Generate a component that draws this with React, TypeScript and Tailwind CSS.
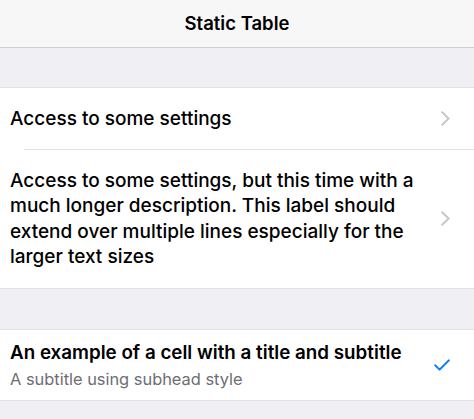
type Row = {
  title: string;
  subtitle?: string;
  accessory: 'chevron' | 'check';
};

const settingsRows: Row[] = [
  { title: 'Access to some settings', accessory: 'chevron' },
  {
    title:
      'Access to some settings, but this time with a much longer description. This label should extend over multiple lines especially for the larger text sizes',
    accessory: 'chevron',
  },
];

const subtitleRows: Row[] = [
  {
    title: 'An example of a cell with a title and subtitle',
    subtitle: 'A subtitle using subhead style',
    accessory: 'check',
  },
];

function Accessory({ kind }: { kind: Row['accessory'] }) {
  if (kind === 'check') {
    return (
      <svg width="16" height="12" viewBox="0 0 16 12" fill="none" stroke="#007aff" strokeWidth="2" strokeLinecap="round" strokeLinejoin="round">
        <polyline points="1.2,6.4 5.6,10.6 14.8,1.4" />
      </svg>
    );
  }
  return (
    <svg width="9" height="15" viewBox="0 0 9 15" fill="none" stroke="#c7c7cc" strokeWidth="2" strokeLinecap="round" strokeLinejoin="round">
      <polyline points="1.2,1.2 7.6,7.5 1.2,13.8" />
    </svg>
  );
}

function Cell({ row, last }: { row: Row; last: boolean }) {
  return (
    <div className="relative flex items-center bg-white pl-[10px] pr-[24px]">
      <div className={row.subtitle ? 'flex-1 py-[10px]' : 'flex-1 py-[18px]'}>
        <div
          className={
            row.subtitle
              ? 'text-[18.8px] font-semibold leading-[25px] text-black'
              : 'text-[19px] font-medium leading-[25.5px] text-black'
          }
        >
          {row.title}
        </div>
        {row.subtitle && (
          <div className="mt-[3px] text-[16.4px] leading-[22px] text-[#6d6d72]">{row.subtitle}</div>
        )}
      </div>
      <div className="ml-[6px] flex w-[16px] justify-end">
        <Accessory kind={row.accessory} />
      </div>
      {!last && <div className="absolute bottom-0 left-[24px] right-0 h-px bg-[#e3e3e6]" />}
    </div>
  );
}

function Group({ rows }: { rows: Row[] }) {
  return (
    <div className="border-y border-[#e3e3e6]">
      {rows.map((row, i) => (
        <Cell key={row.title} row={row} last={i === rows.length - 1} />
      ))}
    </div>
  );
}

export default function App() {
  return (
    <div className="min-h-[419px] bg-[#efeff4] font-['Inter',sans-serif] antialiased">
      <header className="flex h-[48px] items-center justify-center border-b border-[#cfcfd2] bg-[#f7f7f7]">
        <h1 className="text-[18.5px] font-semibold text-black">Static Table</h1>
      </header>
      <div className="h-[39px]" />
      <Group rows={settingsRows} />
      <div className="h-[40px]" />
      <Group rows={subtitleRows} />
    </div>
  );
}
